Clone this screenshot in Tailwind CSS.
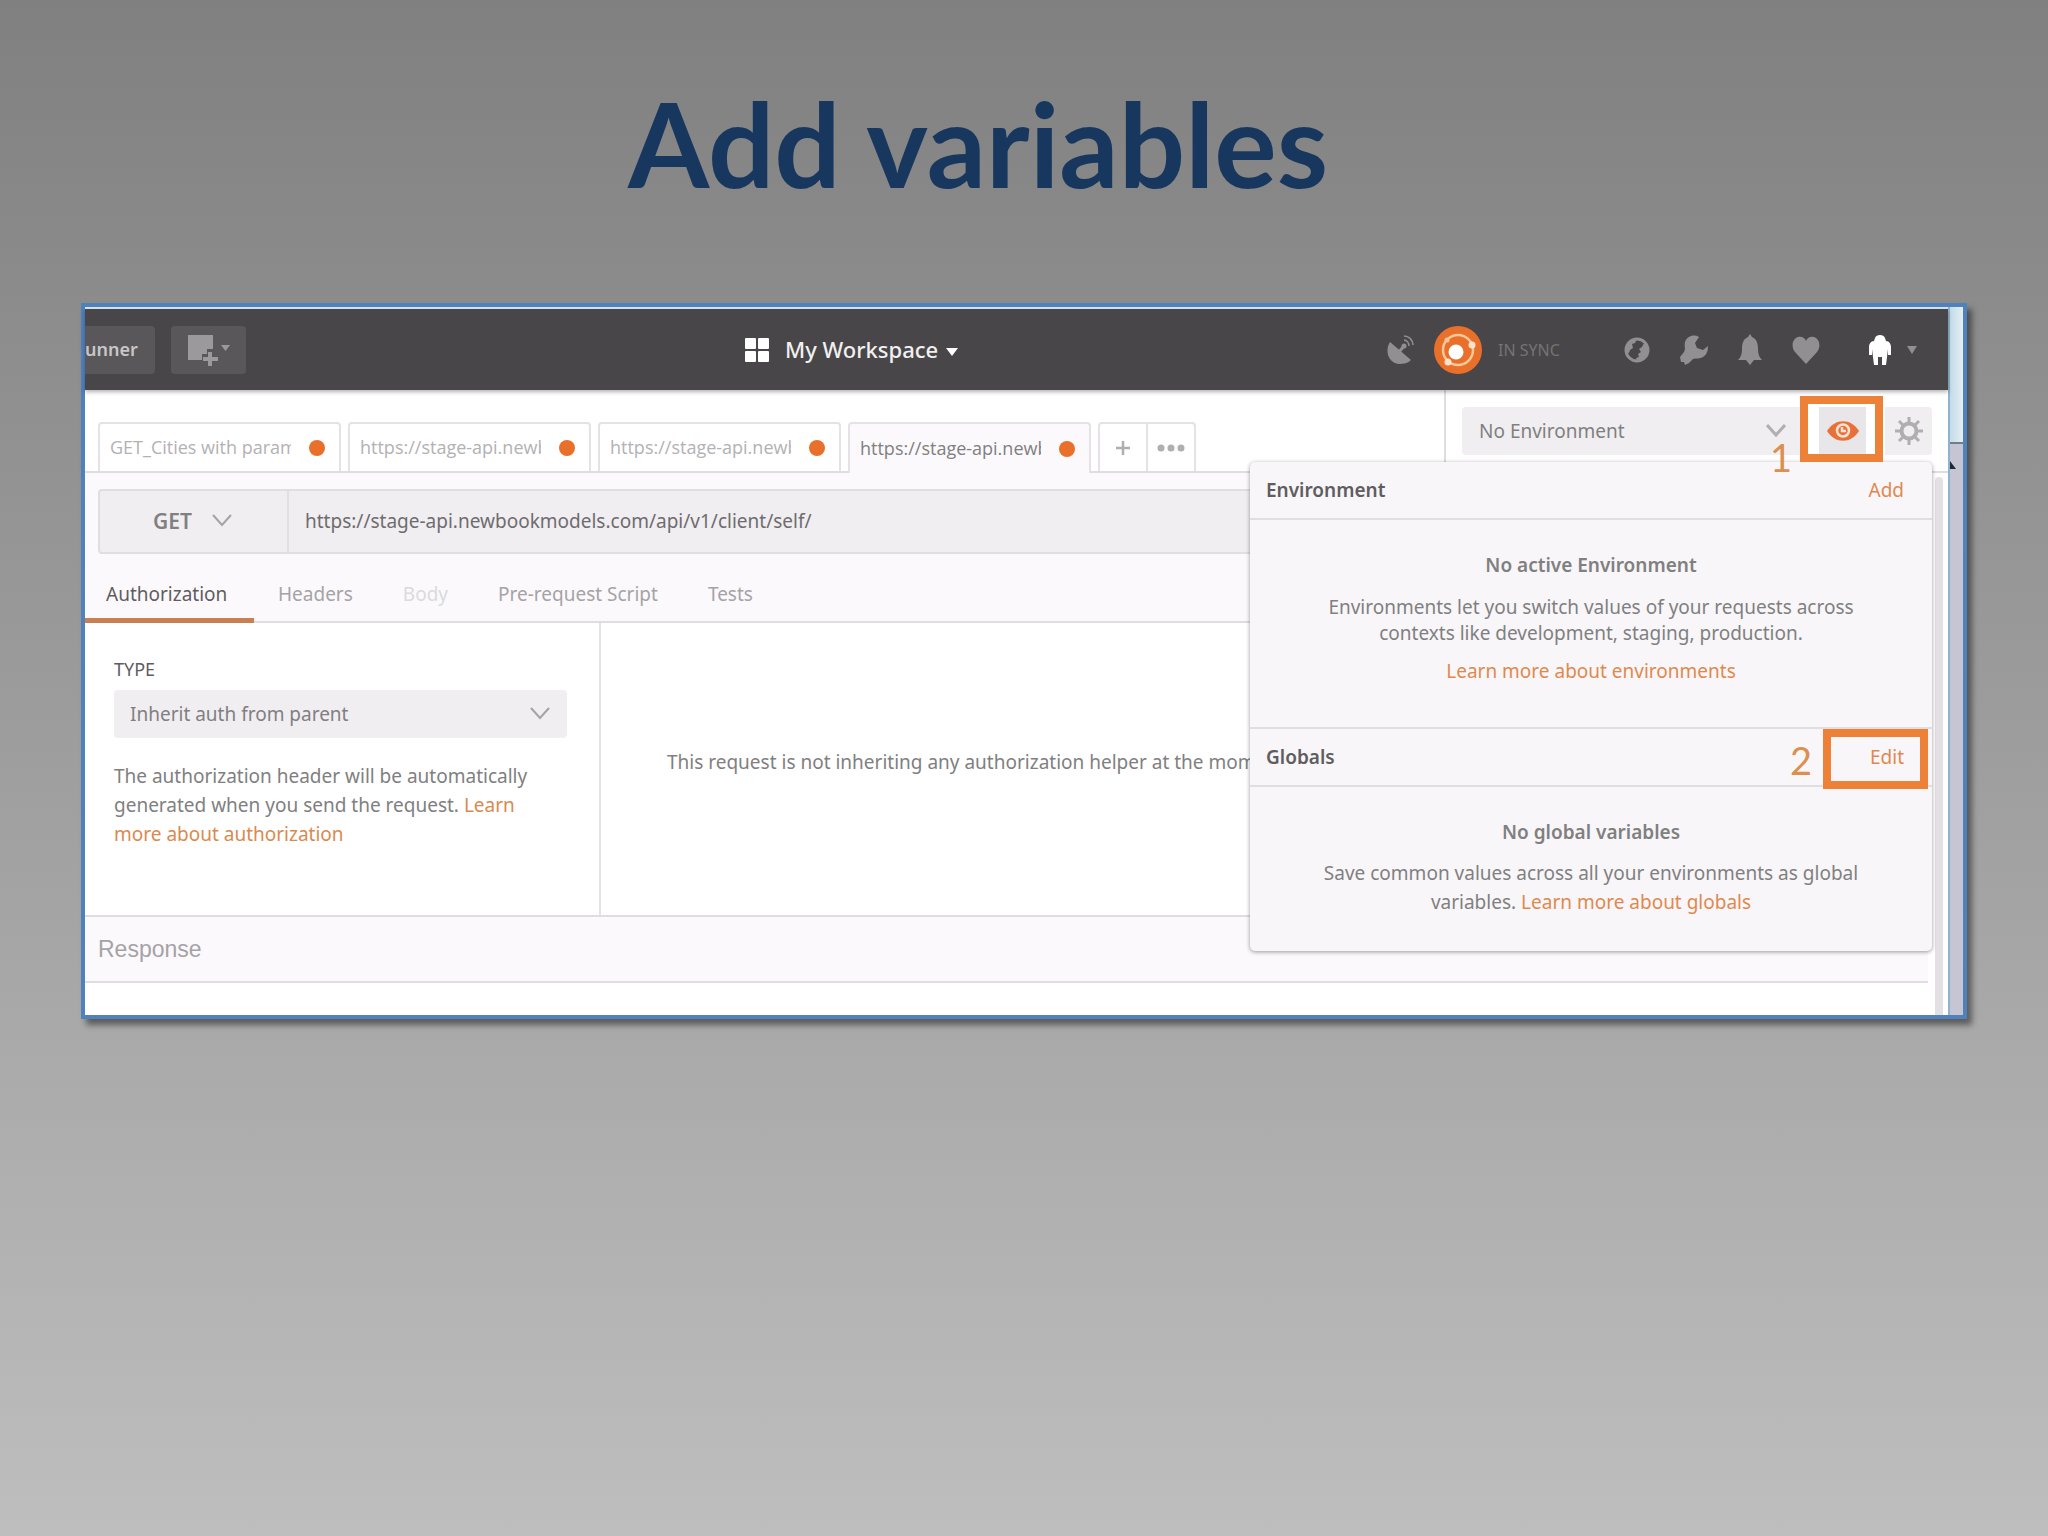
<!DOCTYPE html>
<html lang="en">
<head>
    <meta charset="UTF-8">
    <meta name="viewport" content="width=device-width, initial-scale=1.0">
    <title>Add variables</title>
    <script src="https://cdn.jsdelivr.net/npm/@tailwindcss/browser@4"></script>
</head>
<body class="min-h-screen bg-linear-to-b from-[#808080] to-[#bebebe] font-['Noto_Sans','Open_Sans',sans-serif] text-[18px] text-[#808080]">
    <h1 class="pt-[71px] pr-[92px] text-center font-['Lato',sans-serif] text-[117px] leading-[144px] font-bold text-[#17375e]">Add variables</h1>

    <main class="mx-[81px] mt-[88px] flex border-4 border-[#4f81bd] bg-white shadow-[5px_6px_6px_rgba(0,0,0,0.45)]">
        <div class="relative min-w-0 flex-1 border-t-2 border-[#d5e8f0]">
            <!-- Top bar -->
            <header class="relative flex h-[81px] items-center bg-[#484648] shadow-[0_2px_4px_rgba(0,0,0,0.3)]">
                <div class="flex w-[660px] shrink-0 items-center gap-4">
                    <button class="flex h-12 w-[70px] items-center rounded-r-[4px] bg-[#595759] font-semibold text-[#c8c6c8]">unner</button>
                    <button class="flex h-12 w-[75px] items-center justify-center rounded-[4px] bg-[#595759]" aria-label="New window">
                        <svg class="h-8 w-11" viewBox="0 0 44 32" fill="#9b999b">
                            <path d="M1 1h25v14h-6v5h-5v6H1z"/>
                            <path d="M21 18h4v5h6v4h-6v5h-4v-5h-5v-4h5z"/>
                            <path d="M34 11h9l-4.500 6z"/>
                        </svg>
                    </button>
                </div>
                <button class="flex items-center text-[22px] font-medium text-[#f0f0f0]">
                    <svg class="mr-4 h-6 w-6" viewBox="0 0 24 24" fill="#fff">
                        <rect x="0" y="0" width="11" height="11" rx="1"/>
                        <rect x="13" y="0" width="11" height="11" rx="1"/>
                        <rect x="0" y="13" width="11" height="11" rx="1"/>
                        <rect x="13" y="13" width="11" height="11" rx="1"/>
                    </svg>
                    My Workspace
                    <svg class="mt-1 ml-2 h-3 w-3" viewBox="0 0 12 12" fill="#fff"><path d="M0 2h12l-6 8z"/></svg>
                </button>
                <div class="ml-auto flex items-center pr-[30px] text-[#918f91]">
                    <svg class="mr-5 h-8 w-7" viewBox="0 0 28 32" fill="currentColor">
                        <path d="M4 8C-1 15 1 29 13 30c5 0 9-1 12-4z"/>
                        <path d="M13 18l5-6" stroke="currentColor" stroke-width="3"/>
                        <circle cx="18" cy="12" r="2.500"/>
                        <path d="M18 6c3 0 5 3 5 6M18 2c5 0 9 4 9 9" fill="none" stroke="currentColor" stroke-width="1.500"/>
                    </svg>
                    <svg class="h-12 w-12" viewBox="0 0 48 48">
                        <circle cx="24" cy="24" r="24" fill="#e8702a"/>
                        <circle cx="24" cy="24" r="15" fill="none" stroke="#fbc79b" stroke-width="2.500"/>
                        <circle cx="22" cy="26" r="7.500" fill="#fff"/>
                        <circle cx="38" cy="19" r="3.500" fill="#fde3cc"/>
                        <circle cx="14" cy="36" r="3.500" fill="#fde3cc"/>
                        <circle cx="13" cy="14" r="2.500" fill="#fbc79b"/>
                    </svg>
                    <span class="ml-4 w-[126px] text-[16px] text-[#757375]">IN SYNC</span>
                    <div class="flex items-center gap-[30px]">
                        <svg class="h-[26px] w-[26px]" viewBox="0 0 26 26">
                            <circle cx="13" cy="13" r="11" fill="none" stroke="currentColor" stroke-width="3"/>
                            <path d="M2 9l5-6 6-1-2 4-3 1 1 4-3 2-1 3-3-1z" fill="currentColor"/>
                            <path d="M20 6l3 4v7l-4 5-6 2-1-3 3-1-1-3 3-2-2-3 3-2z" fill="currentColor"/>
                        </svg>
                        <svg class="h-8 w-7" viewBox="0 0 28 32" fill="currentColor">
                            <path d="M19 3C14 0 7 2 5 8c-1 4 1 7-1 10l-4 5 1 5h3l1 3 4-2 4-4c3-1 7 0 10-2 4-2 5-7 5-11l-5 4-6-2-2-5z"/>
                        </svg>
                        <svg class="h-8 w-6" viewBox="0 0 24 32" fill="currentColor">
                            <path d="M12 0l2 3c5 2 6 7 6 12 0 5 1 8 4 11H0c3-3 4-6 4-11 0-5 1-10 6-12z"/>
                            <path d="M8 26h8l-4 5z"/>
                        </svg>
                        <svg class="h-7 w-7" viewBox="0 0 28 28" fill="currentColor">
                            <path d="M14 28L3 16C-1 11 0 3 6 1c4-1 7 1 8 4 1-3 4-5 8-4 6 2 7 10 3 15z"/>
                        </svg>
                    </div>
                    <button class="ml-[48px] flex items-center gap-[14px]" aria-label="Account">
                        <svg class="h-8 w-6" viewBox="0 0 24 32" fill="#fff">
                            <path d="M7 4c1-4 9-4 10 0l1 3c3 0 5 3 5 6v8h-3v-6l-1 8-1 8h-4v-8h-4v8H6l-1-8-1-8v6H1v-8c0-3 2-6 5-6z"/>
                        </svg>
                        <svg class="h-3 w-3" viewBox="0 0 12 12" fill="#918f91"><path d="M1 2h10l-5 8z"/></svg>
                    </button>
                </div>
            </header>

            <!-- Request tabs and environment picker -->
            <div class="flex h-[83px] justify-between">
                <nav class="flex flex-1 items-end gap-[7px] border-b-2 border-[#dfdde0] pl-[13px] font-['Open_Sans',sans-serif]">
                    <button class="flex h-[49px] w-[243px] items-center justify-between rounded-t-[4px] border-2 border-b-0 border-[#e4e2e5] px-[10px] text-[#b3b1b4]">
                        <span class="w-[181px] overflow-hidden text-left whitespace-nowrap">GET_Cities with params</span>
                        <span class="mr-1 h-4 w-4 shrink-0 rounded-full bg-[#e8702a]"></span>
                    </button>
                    <button class="flex h-[49px] w-[243px] items-center justify-between rounded-t-[4px] border-2 border-b-0 border-[#e4e2e5] px-[10px] text-[#b3b1b4]">
                        <span class="w-[181px] overflow-hidden text-left whitespace-nowrap">https://stage-api.newbook</span>
                        <span class="mr-1 h-4 w-4 shrink-0 rounded-full bg-[#e8702a]"></span>
                    </button>
                    <button class="flex h-[49px] w-[243px] items-center justify-between rounded-t-[4px] border-2 border-b-0 border-[#e4e2e5] px-[10px] text-[#b3b1b4]">
                        <span class="w-[181px] overflow-hidden text-left whitespace-nowrap">https://stage-api.newbook</span>
                        <span class="mr-1 h-4 w-4 shrink-0 rounded-full bg-[#e8702a]"></span>
                    </button>
                    <button class="-mb-[2px] flex h-[51px] w-[243px] items-center justify-between rounded-t-[4px] border-2 border-b-0 border-[#e4e2e5] bg-[#fbf9fc] px-[10px] text-[#808080]">
                        <span class="w-[181px] overflow-hidden text-left whitespace-nowrap">https://stage-api.newbook</span>
                        <span class="mr-1 h-4 w-4 shrink-0 rounded-full bg-[#e8702a]"></span>
                    </button>
                    <div class="flex h-[49px] divide-x-2 divide-[#e4e2e5] rounded-t-[4px] border-2 border-b-0 border-[#e4e2e5]">
                        <button class="flex w-[48px] items-center justify-center" aria-label="New tab">
                            <svg class="h-[14px] w-[14px]" viewBox="0 0 14 14"><path d="M7 0v14M0 7h14" stroke="#b0aeb1" stroke-width="2.500"/></svg>
                        </button>
                        <button class="flex w-[46px] items-center justify-center" aria-label="More tabs">
                            <svg class="h-2 w-7" viewBox="0 0 28 8" fill="#b0aeb1"><circle cx="4" cy="4" r="3.500"/><circle cx="14" cy="4" r="3.500"/><circle cx="24" cy="4" r="3.500"/></svg>
                        </button>
                    </div>
                </nav>
                <div class="flex items-start border-b-2 border-l-2 border-[#dfdde0] pt-[17px] pr-4 pl-4">
                    <div class="relative">
                        <select aria-label="Environment" class="h-12 w-[342px] appearance-none rounded-l-[4px] bg-[#f0eef1] pl-[17px] text-[19px] text-[#808080]">
                            <option>No Environment</option>
                        </select>
                        <svg class="pointer-events-none absolute top-4 right-[18px] h-4 w-5" viewBox="0 0 20 16" fill="none" stroke="#b0aeb1" stroke-width="3"><path d="M1 2l9 10 9-10"/></svg>
                        <span class="absolute top-[30px] right-[12px] z-20 font-['Lato',sans-serif] text-[38px] leading-[40px] text-[#dc9050]">1</span>
                    </div>
                    <div class="relative mr-[19px] ml-[15px]">
                        <button class="flex h-12 w-[47px] items-center justify-center bg-[#e8e6e9]" aria-label="Environment quick look">
                            <svg class="h-5 w-8" viewBox="0 0 32 20">
                                <path d="M0 10C8-3 24-3 32 10 24 23 8 23 0 10z" fill="#e8703a"/>
                                <circle cx="16" cy="9.500" r="6" fill="#e8703a" stroke="#fbe3d3" stroke-width="2.500"/>
                                <path d="M15 6v4h4" fill="none" stroke="#fbe3d3" stroke-width="2.500"/>
                            </svg>
                        </button>
                        <span class="pointer-events-none absolute -top-[11px] -right-[17px] -bottom-[7px] -left-[19px] z-20 border-8 border-[#ed8137]"></span>
                    </div>
                    <button class="flex h-12 w-[47px] items-center justify-center rounded-r-[4px] bg-[#f0eef1]" aria-label="Manage environments">
                        <svg class="h-7 w-7" viewBox="0 0 28 28" fill="none" stroke="#b0aeb1">
                            <circle cx="14" cy="14" r="7.500" stroke-width="4"/>
                            <path d="M14 0v6M14 22v6M0 14h6M22 14h6M4 4l5 5M19 19l5 5M24 4l-5 5M9 19l-5 5" stroke-width="3"/>
                        </svg>
                    </button>
                </div>
            </div>

            <div class="flex">
                <div class="min-w-0 flex-1">
                    <!-- Request builder -->
                    <section class="bg-[#fbf9fc] pt-4">
                        <div class="ml-[13px] flex h-[65px] rounded-[4px] border-2 border-[#e0dee1] bg-[#f0eef1]">
                            <div class="relative border-r-2 border-[#e0dee1]">
                                <select aria-label="Method" class="h-full w-[187px] appearance-none pl-[53px] text-[21px] font-semibold text-[#808080]">
                                    <option>GET</option>
                                </select>
                                <svg class="pointer-events-none absolute top-[22px] right-[55px] h-4 w-5" viewBox="0 0 20 16" fill="none" stroke="#a5a3a6" stroke-width="2"><path d="M1 2l9 10 9-10"/></svg>
                            </div>
                            <input aria-label="Request URL" class="min-w-0 flex-1 pl-4 text-[19px] text-[#6e6c6f]" value="https://stage-api.newbookmodels.com/api/v1/client/self/">
                        </div>
                        <nav class="flex h-[69px] border-b-2 border-[#dfdde0] text-[19px] leading-[80px] text-[#a5a3a6]">
                            <a href="#" class="-mb-[2px] w-[169px] border-b-[5px] border-[#c87f52] pl-[21px] text-[#5f5d60]">Authorization</a>
                            <a href="#" class="ml-6">Headers</a>
                            <a href="#" class="ml-[50px] text-[#dcdadd]">Body</a>
                            <a href="#" class="ml-[50px]">Pre-request Script</a>
                            <a href="#" class="ml-[50px]">Tests</a>
                        </nav>
                    </section>

                    <!-- Authorization -->
                    <section class="flex h-[292px]">
                        <div class="w-[516px] shrink-0 border-r-2 border-[#e4e2e5] pt-[31px] pr-8 pl-[29px]">
                            <label for="authType" class="block leading-[30px] text-[#5f5d60]">TYPE</label>
                            <div class="relative mt-[6px]">
                                <select id="authType" class="h-12 w-full appearance-none rounded-[4px] bg-[#f0eef1] pl-4 text-[19px] text-[#808080]">
                                    <option>Inherit auth from parent</option>
                                </select>
                                <svg class="pointer-events-none absolute top-4 right-[17px] h-4 w-5" viewBox="0 0 20 16" fill="none" stroke="#a5a3a6" stroke-width="2"><path d="M1 2l9 10 9-10"/></svg>
                            </div>
                            <p class="mt-6 pr-5 text-[19px] leading-[29px]">The authorization header will be automatically generated when you send the request. <a href="#" class="text-[#d98a50]">Learn more about authorization</a></p>
                        </div>
                        <p class="flex-1 overflow-hidden pt-[125px] pl-[66px] text-[19px] leading-[29px] whitespace-nowrap">This request is not inheriting any authorization helper at the moment.</p>
                    </section>

                    <section class="h-[68px] border-y-2 border-[#dfdde0] bg-[#fbf9fc] pl-[13px]">
                        <h2 class="font-['Liberation_Sans',sans-serif] text-[23px] leading-[64px] text-[#a5a3a6]">Response</h2>
                    </section>
                    <div class="h-8"></div>
                </div>
                <!-- Page scrollbar -->
                <div class="mt-1 mr-[5px] ml-[7px] w-2 rounded-t-[4px] bg-[#e2e0e3]"></div>
            </div>

            <!-- Environment quick look -->
            <aside class="absolute top-[153px] right-4 w-[682px] rounded-[5px] bg-[#f8f6f9] pb-[34px] text-center text-[19px] shadow-[0_1px_4px_rgba(0,0,0,0.4)]">
                <div class="flex h-[58px] items-center justify-between border-b-2 border-[#e0dee1] pr-7 pl-4">
                    <h2 class="font-semibold text-[#5f5d60]">Environment</h2>
                    <button class="text-[#e0894e]">Add</button>
                </div>
                <div class="h-[207px] pt-8">
                    <h3 class="leading-[26px] font-semibold">No active Environment</h3>
                    <p class="mx-auto mt-4 w-[560px] leading-[26px]">Environments let you switch values of your requests across contexts like development, staging, production.</p>
                    <a href="#" class="mt-3 block leading-[26px] text-[#e0894e]">Learn more about environments</a>
                </div>
                <div class="flex h-[60px] items-center justify-between border-y-2 border-[#e0dee1] pl-4">
                    <h2 class="font-semibold text-[#5f5d60]">Globals</h2>
                    <div class="relative pr-7">
                        <button class="text-[#e0894e]">Edit</button>
                        <span class="pointer-events-none absolute -top-[14px] right-1 h-[60px] w-[105px] border-8 border-[#ed8137]"></span>
                        <span class="absolute -top-[3px] right-[120px] font-['Lato',sans-serif] text-[38px] leading-[40px] text-[#dc9050]">2</span>
                    </div>
                </div>
                <h3 class="pt-8 leading-[26px] font-semibold">No global variables</h3>
                <p class="mx-auto mt-[14px] w-[560px] leading-[29px]">Save common values across all your environments as global variables. <a href="#" class="text-[#e0894e]">Learn more about globals</a></p>
            </aside>
        </div>

        <!-- Edge of the window behind -->
        <div class="flex w-[15px] flex-col border-l-2 border-[#8fb3cc]">
            <div class="h-[137px] border-b-2 border-[#6d7f8c] bg-linear-to-r from-[#c3dcea] to-[#e6edf2]"></div>
            <div class="flex-1 bg-[#c5c5d4]">
                <svg class="mt-4 h-[10px] w-[6px]" viewBox="0 0 6 10" fill="#1c2a3a"><path d="M0 1l6 8H0z"/></svg>
            </div>
        </div>
    </main>
</body>
</html>
